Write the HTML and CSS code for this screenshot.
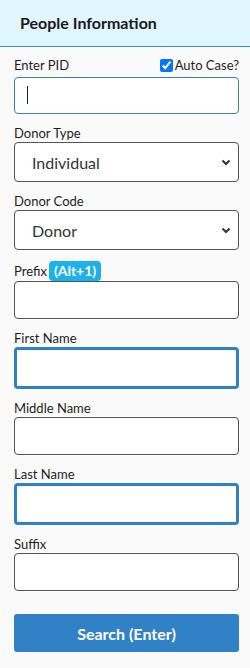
FILE: index.html
```html
<!DOCTYPE html>
<html lang="en">
<head>
    <meta charset="UTF-8">
    <meta name="viewport" content="width=device-width, initial-scale=1.0">
    <title>People Information</title>
    <link rel="stylesheet" href="styles.css">
</head>
<body>

    <div class="panel">
        <div class="panel-header">
            <h2>People Information</h2>
        </div>

        <div class="panel-body">
            <!-- PID -->
            <div class="field">
                <div class="label-row">
                    <label for="pid">Enter PID</label>
                    <label class="check"><input type="checkbox" checked> Auto Case?</label>
                </div>
                <div class="input-wrap">
                    <input type="text" id="pid" class="text-input active" autofocus>
                    <span class="caret"></span>
                </div>
            </div>

            <div class="field">
                <label for="donorType">Donor Type</label>
                <select id="donorType" class="select-input">
                    <option>Individual</option>
                    <option>Organization</option>
                </select>
            </div>

            <div class="field">
                <label for="donorCode">Donor Code</label>
                <select id="donorCode" class="select-input">
                    <option>Donor</option>
                </select>
            </div>

            <div class="field">
                <div class="label-row prefix-row">
                    <label for="prefix">Prefix</label>
                    <span class="hotkey">(Alt+1)</span>
                </div>
                <input type="text" id="prefix" class="text-input">
            </div>

            <div class="field">
                <label for="firstName">First Name</label>
                <input type="text" id="firstName" class="text-input required">
            </div>

            <div class="field">
                <label for="middleName">Middle Name</label>
                <input type="text" id="middleName" class="text-input">
            </div>

            <div class="field">
                <label for="lastName">Last Name</label>
                <input type="text" id="lastName" class="text-input required">
            </div>

            <div class="field">
                <label for="suffix">Suffix</label>
                <input type="text" id="suffix" class="text-input">
            </div>

            <button class="search-btn">Search (Enter)</button>
        </div>
    </div>

</body>
</html>
```

FILE: styles.css
```css
* {
    margin: 0;
    padding: 0;
    box-sizing: border-box;
    font-family: Lato, "Open Sans", sans-serif;
}
body {
    background-color: #fafafa;
    color: #1e1e1e;
}
.panel-header {
    height: 47px;
    background: #e1f5fe;
    border-bottom: 1px solid #3b8fd1;
    padding: 13px 20px 0;
}
.panel-header h2 {
    font-size: 16px;
    font-weight: bold;
    color: #1a1a1a;
    line-height: 19px;
}
.panel-body {
    padding: 10px 11px 0 14px;
}
.field {
    display: flex;
    flex-direction: column;
    margin-bottom: 11px;
}
.field label {
    font-size: 13px;
    line-height: 17px;
}
.label-row {
    display: flex;
    justify-content: space-between;
    align-items: center;
    margin-bottom: 3px;
}
.check {
    display: flex;
    align-items: center;
    gap: 2px;
}
.check input {
    width: 13px;
    height: 13px;
    margin: 0;
}
.prefix-row {
    justify-content: flex-start;
    gap: 2px;
    height: 20px;
    margin-bottom: 0;
}
.hotkey {
    background: #1bb1ea;
    color: white;
    font-size: 14px;
    font-weight: bold;
    line-height: 20px;
    padding: 0 5px;
    border-radius: 4px;
}
.input-wrap {
    position: relative;
    display: flex;
    flex-direction: column;
}
.caret {
    position: absolute;
    left: 13px;
    top: 9px;
    width: 1px;
    height: 18px;
    background: #222;
}
.text-input {
    height: 38px;
    border: 1px solid #555;
    border-radius: 4px;
    background: white;
    padding: 0 12px;
    font-size: 15px;
    outline: none;
    caret-color: transparent;
}
.text-input.active {
    height: 37px;
    border-color: #3a82c4;
}
.text-input.required {
    height: 42px;
    border: 3px solid #3080c4;
}
.select-input {
    appearance: none;
    height: 40px;
    border: 1px solid #555;
    border-radius: 4px;
    background: white url("data:image/svg+xml;utf8,<svg xmlns='http://www.w3.org/2000/svg' width='10' height='7' viewBox='0 0 10 7'><path d='M1.5 1.5 L5 5 L8.5 1.5' fill='none' stroke='%23333' stroke-width='2'/></svg>") no-repeat right 7px center;
    padding: 0 30px 0 17px;
    font-size: 16px;
    color: #333;
}
.search-btn {
    display: block;
    width: 100%;
    height: 38px;
    margin-top: 23px;
    background: #3181c6;
    color: white;
    border: none;
    border-radius: 3px;
    font-size: 16px;
    font-weight: bold;
    cursor: pointer;
}
.search-btn:hover {
    background: #2a72b0;
}
```
